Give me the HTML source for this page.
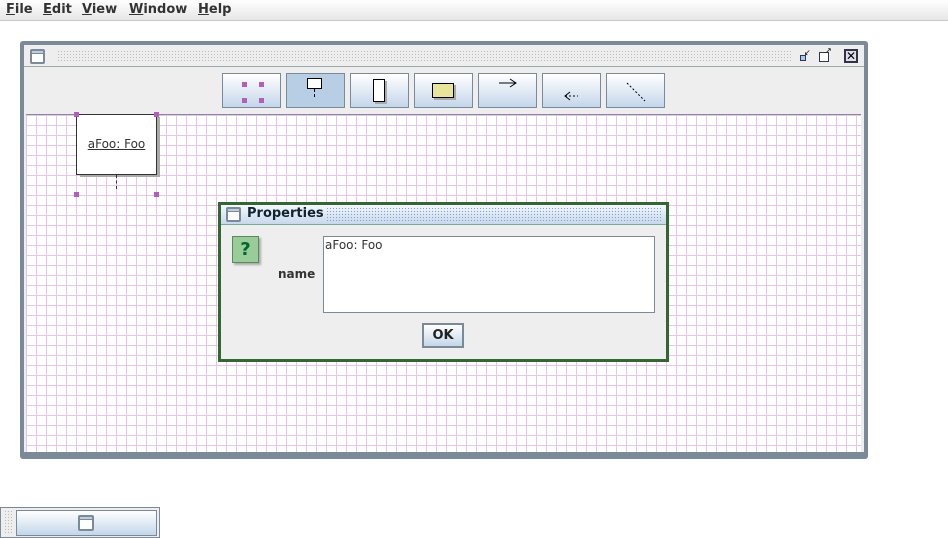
<!DOCTYPE html>
<html><head><style>
*{margin:0;padding:0;box-sizing:border-box}
body{width:948px;height:538px;background:#fff;position:relative;overflow:hidden;font-family:"DejaVu Sans","Liberation Sans",sans-serif}
.abs{position:absolute}
.menu{left:0;top:0;width:948px;height:21px;background:linear-gradient(#fff,#e6e6e6);border-bottom:1px solid #c8c8c8}
.menu span{position:absolute;top:2px;font-size:13px;font-weight:bold;color:#333}
.menu u{text-decoration:underline}
.dots{background-image:radial-gradient(#bbb 0.6px,transparent 0.8px);background-size:3px 3px}
.btn{position:absolute;top:73px;width:59px;height:35px;border:1px solid #7a8a99;background:linear-gradient(#fff,#c4d6ea)}
.grid{background-color:#fff;background-image:linear-gradient(90deg,#e6c6e6 1px,transparent 1px),linear-gradient(#e6c6e6 1px,transparent 1px);background-size:10px 10px}
.h{position:absolute;width:5px;height:5px;background:#b060b8}
</style></head><body>
<div class="abs menu">
<span style="left:6px"><u>F</u>ile</span>
<span style="left:43px"><u>E</u>dit</span>
<span style="left:82px"><u>V</u>iew</span>
<span style="left:129px"><u>W</u>indow</span>
<span style="left:198px"><u>H</u>elp</span>
</div>
<!-- outer frame -->
<div class="abs" style="left:20px;top:41px;width:848px;height:418px;background:#7a8a99;border-radius:3px"></div>
<div class="abs" style="left:24px;top:45px;width:840px;height:410px;background:#eeeeee"></div>
<div class="abs" style="left:24px;top:66px;width:840px;height:1px;background:#9aa"></div>
<!-- title icon -->
<div class="abs" style="left:30px;top:49px;width:15px;height:15px;border:2px solid #7a8a99;border-radius:2px;background:#fff"><div style="height:3px;background:#c0ccdc;border-bottom:1px solid #7a8a99"></div></div>
<div class="abs dots" style="left:57px;top:50px;width:735px;height:13px"></div>
<!-- window controls -->
<div class="abs" style="left:800px;top:55px;width:6px;height:6px;border:1px solid #334;background:#9cf"></div>
<div class="abs" style="left:804px;top:49px;font-size:8px;line-height:8px">↙</div>
<div class="abs" style="left:819px;top:52px;width:10px;height:10px;border:1.5px solid #335;background:#fff"></div>
<div class="abs" style="left:825px;top:47px;font-size:8px;line-height:8px">↗</div>
<div class="abs" style="left:844px;top:49px;width:14px;height:14px;border:2px solid #334;background:#dde;font-size:12px;line-height:10px;text-align:center">✕</div>
<!-- toolbar buttons -->
<div class="btn" style="left:222px"><div class="h" style="left:19px;top:8px;background:#b060b8"></div><div class="h" style="left:36px;top:8px"></div><div class="h" style="left:19px;top:24px"></div><div class="h" style="left:36px;top:24px"></div></div>
<div class="btn" style="left:286px;background:#b8cee4"><div class="abs" style="left:20px;top:4px;width:15px;height:11px;border:1px solid #000;background:#fff"></div><div class="abs" style="left:27px;top:15px;width:1px;height:8px;border-left:1px dashed #000"></div></div>
<div class="btn" style="left:350px"><div class="abs" style="left:22px;top:5px;width:12px;height:23px;border:1px solid #000;background:#fff;box-shadow:2px 2px 0 #aaa"></div></div>
<div class="btn" style="left:414px"><div class="abs" style="left:17px;top:9px;width:22px;height:15px;border:1px solid #000;background:#e8e49c;box-shadow:2px 2px 0 #aaa"></div></div>
<div class="btn" style="left:478px"><svg class="abs" style="left:18px;top:3px" width="22" height="12"><path d="M2 6H19M13 2L19 6L13 10" stroke="#000" fill="none"/></svg></div>
<div class="btn" style="left:542px"><svg class="abs" style="left:20px;top:16px" width="18" height="12"><path d="M2 6H15" stroke="#000" stroke-dasharray="2 2" fill="none"/><path d="M7 2L2 6L7 10" stroke="#000" fill="none"/></svg></div>
<div class="btn" style="left:606px"><svg class="abs" style="left:18px;top:6px" width="24" height="24"><path d="M2 3L20 21" stroke="#000" stroke-dasharray="2 2"/></svg></div>
<!-- canvas -->
<div class="abs grid" style="left:26px;top:114px;width:835px;height:338px;border-top:1px solid #889"></div>
<div class="abs" style="left:24px;top:452px;width:840px;height:3px;background:#7a8a99"></div>
<!-- object -->
<div class="abs" style="left:80px;top:117px;width:80px;height:60px;background:#aaa"></div>
<div class="abs" style="left:76px;top:114px;width:81px;height:61px;border:1px solid #333;background:#fff;font-size:12px;text-align:center;padding-top:22px;color:#333"><u>aFoo: Foo</u></div>
<div class="abs" style="left:116px;top:175px;width:1px;height:14px;border-left:1px dashed #333"></div>
<div class="h" style="left:74px;top:112px"></div><div class="h" style="left:154px;top:112px"></div>
<div class="h" style="left:74px;top:192px"></div><div class="h" style="left:154px;top:192px"></div>
<!-- dialog -->
<div class="abs" style="left:218px;top:202px;width:451px;height:160px;border:3px solid #336633;background:#eeeeee"></div>
<div class="abs" style="left:221px;top:205px;width:445px;height:20px;background:linear-gradient(#f4f8fc,#c8d8ec);border-bottom:1px solid #7a9"></div>
<div class="abs" style="left:326px;top:207px;width:335px;height:16px;background-image:radial-gradient(#7f9fd0 0.6px,transparent 0.8px);background-size:3px 3px"></div>
<div class="abs" style="left:226px;top:207px;width:15px;height:15px;border:2px solid #7a8a99;border-radius:2px;background:#fff"><div style="height:3px;background:#c0ccdc;border-bottom:1px solid #7a8a99"></div></div>
<div class="abs" style="left:247px;top:206px;font-size:13px;font-weight:bold;color:#123">Properties</div>
<div class="abs" style="left:232px;top:236px;width:27px;height:27px;background:#99cc99;border:1px solid #5a8a5a;box-shadow:2px 2px 2px #aaa;text-align:center;font-weight:bold;font-size:18px;line-height:26px;color:#063"><span style="color:#063">?</span></div>
<div class="abs" style="left:278px;top:267px;font-size:12px;font-weight:bold;color:#333">name</div>
<div class="abs" style="left:323px;top:236px;width:332px;height:77px;background:#fff;border:1px solid #7a8a99;font-size:12px;padding:1px 0 0 1px;color:#333">aFoo: Foo</div>
<div class="abs" style="left:422px;top:323px;width:42px;height:25px;border:2px solid #7a8a99;background:linear-gradient(#fff,#c4d6ea);font-size:13px;font-weight:bold;text-align:center;line-height:21px;color:#222">OK</div>
<!-- minimized -->
<div class="abs" style="left:0;top:507px;width:160px;height:31px;border:1px solid #7a8a99;background:#eee"></div>
<div class="abs dots" style="left:4px;top:510px;width:10px;height:25px"></div>
<div class="abs" style="left:16px;top:510px;width:141px;height:26px;border:1px solid #7a8a99;background:linear-gradient(#fff,#c4d6ea)"></div>
<div class="abs" style="left:78px;top:515px;width:16px;height:16px;border:2px solid #7a8a99;border-radius:2px;background:#fff"><div style="height:3px;background:#c0ccdc;border-bottom:1px solid #7a8a99"></div></div>
</body></html>
